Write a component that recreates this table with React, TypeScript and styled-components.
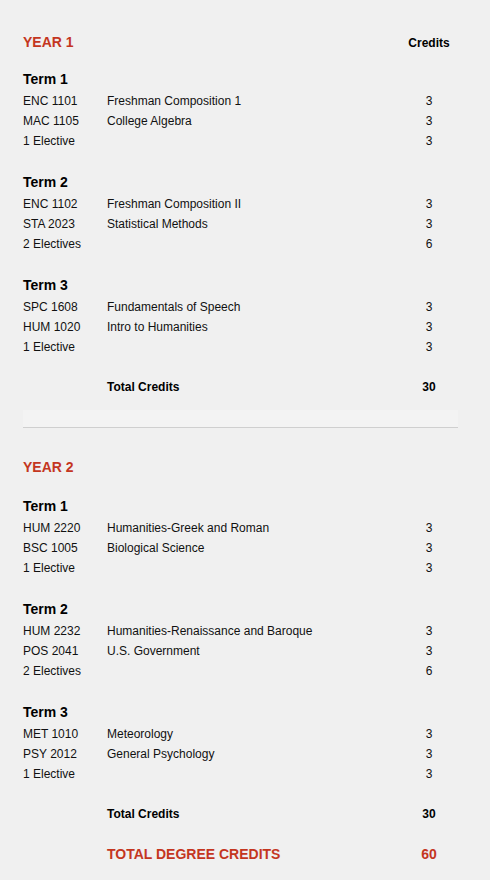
import React from "react";
import styled, { createGlobalStyle } from "styled-components";

interface Course {
  code: string;
  title?: string;
  credits: number;
}

interface Term {
  name: string;
  courses: Course[];
}

interface Year {
  name: string;
  terms: Term[];
  total: number;
}

const years: Year[] = [
  {
    name: "YEAR 1",
    total: 30,
    terms: [
      {
        name: "Term 1",
        courses: [
          { code: "ENC 1101", title: "Freshman Composition 1", credits: 3 },
          { code: "MAC 1105", title: "College Algebra", credits: 3 },
          { code: "1 Elective", credits: 3 },
        ],
      },
      {
        name: "Term 2",
        courses: [
          { code: "ENC 1102", title: "Freshman Composition II", credits: 3 },
          { code: "STA 2023", title: "Statistical Methods", credits: 3 },
          { code: "2 Electives", credits: 6 },
        ],
      },
      {
        name: "Term 3",
        courses: [
          { code: "SPC 1608", title: "Fundamentals of Speech", credits: 3 },
          { code: "HUM 1020", title: "Intro to Humanities", credits: 3 },
          { code: "1 Elective", credits: 3 },
        ],
      },
    ],
  },
  {
    name: "YEAR 2",
    total: 30,
    terms: [
      {
        name: "Term 1",
        courses: [
          { code: "HUM 2220", title: "Humanities-Greek and Roman", credits: 3 },
          { code: "BSC 1005", title: "Biological Science", credits: 3 },
          { code: "1 Elective", credits: 3 },
        ],
      },
      {
        name: "Term 2",
        courses: [
          { code: "HUM 2232", title: "Humanities-Renaissance and Baroque", credits: 3 },
          { code: "POS 2041", title: "U.S. Government", credits: 3 },
          { code: "2 Electives", credits: 6 },
        ],
      },
      {
        name: "Term 3",
        courses: [
          { code: "MET 1010", title: "Meteorology", credits: 3 },
          { code: "PSY 2012", title: "General Psychology", credits: 3 },
          { code: "1 Elective", credits: 3 },
        ],
      },
    ],
  },
];

const RED = "#c4361f";

const GlobalStyle = createGlobalStyle`
  html, body {
    margin: 0;
    padding: 0;
    background: #f0f0f0;
  }
  body {
    font-family: "Liberation Sans", Arial, sans-serif;
    color: #111;
  }
`;

const App: React.FC = () => {
  return (
    <>
      <GlobalStyle />
      <Page>
        {years.map((year, yi) => (
          <YearBlock key={year.name} $first={yi === 0}>
            <YearRow>
              <YearTitle>{year.name}</YearTitle>
              <span />
              {yi === 0 ? <CreditsHead>Credits</CreditsHead> : <span />}
            </YearRow>
            {year.terms.map((term) => (
              <TermBlock key={term.name}>
                <TermTitle>{term.name}</TermTitle>
                {term.courses.map((c, i) => (
                  <Row key={i}>
                    <span>{c.code}</span>
                    <span>{c.title ?? ""}</span>
                    <Credit>{c.credits}</Credit>
                  </Row>
                ))}
              </TermBlock>
            ))}
            <TotalRow>
              <span />
              <span>Total Credits</span>
              <Credit>{year.total}</Credit>
            </TotalRow>
            {yi === 0 && (
              <>
                <Shade />
                <Divider />
              </>
            )}
          </YearBlock>
        ))}
        <DegreeRow>
          <span />
          <span>TOTAL DEGREE CREDITS</span>
          <Credit>60</Credit>
        </DegreeRow>
      </Page>
    </>
  );
};

export default App;

const Page = styled.div`
  width: 490px;
  min-height: 880px;
  box-sizing: border-box;
  padding: 30px 32px 0 23px;
  background: #f0f0f0;
`;

const YearBlock = styled.section<{ $first: boolean }>`
  display: flex;
  flex-direction: column;
  margin-top: ${(p) => (p.$first ? "0" : "27px")};
  --term-gap: ${(p) => (p.$first ? "13px" : "15px")};
`;

const Grid = styled.div`
  display: grid;
  grid-template-columns: 84px 1fr 44px;
  align-items: center;
  margin-right: 7px;
`;

const YearRow = styled(Grid)`
  height: 24px;
`;

const YearTitle = styled.div`
  color: ${RED};
  font-size: 14px;
  font-weight: 700;
`;

const CreditsHead = styled.div`
  font-size: 12px;
  font-weight: 700;
  text-align: center;
  color: #000;
  padding-top: 2px;
`;

const TermBlock = styled.div`
  margin-top: var(--term-gap);
  & + & {
    margin-top: 19px;
  }
`;

const TermTitle = styled.div`
  height: 24px;
  line-height: 24px;
  font-size: 14px;
  font-weight: 700;
  color: #000;
`;

const Row = styled(Grid)`
  height: 20px;
  font-size: 12px;
`;

const Credit = styled.span`
  text-align: center;
`;

const TotalRow = styled(Grid)`
  height: 20px;
  margin-top: 20px;
  font-size: 12px;
  font-weight: 700;
  color: #000;
`;

const Shade = styled.div`
  height: 17px;
  margin-top: 13px;
  background: #f3f3f3;
`;

const Divider = styled.div`
  height: 1px;
  background: #cfcfcf;
`;

const DegreeRow = styled(Grid)`
  height: 24px;
  margin-top: 18px;
  font-size: 14px;
  font-weight: 700;
  color: ${RED};
`;
